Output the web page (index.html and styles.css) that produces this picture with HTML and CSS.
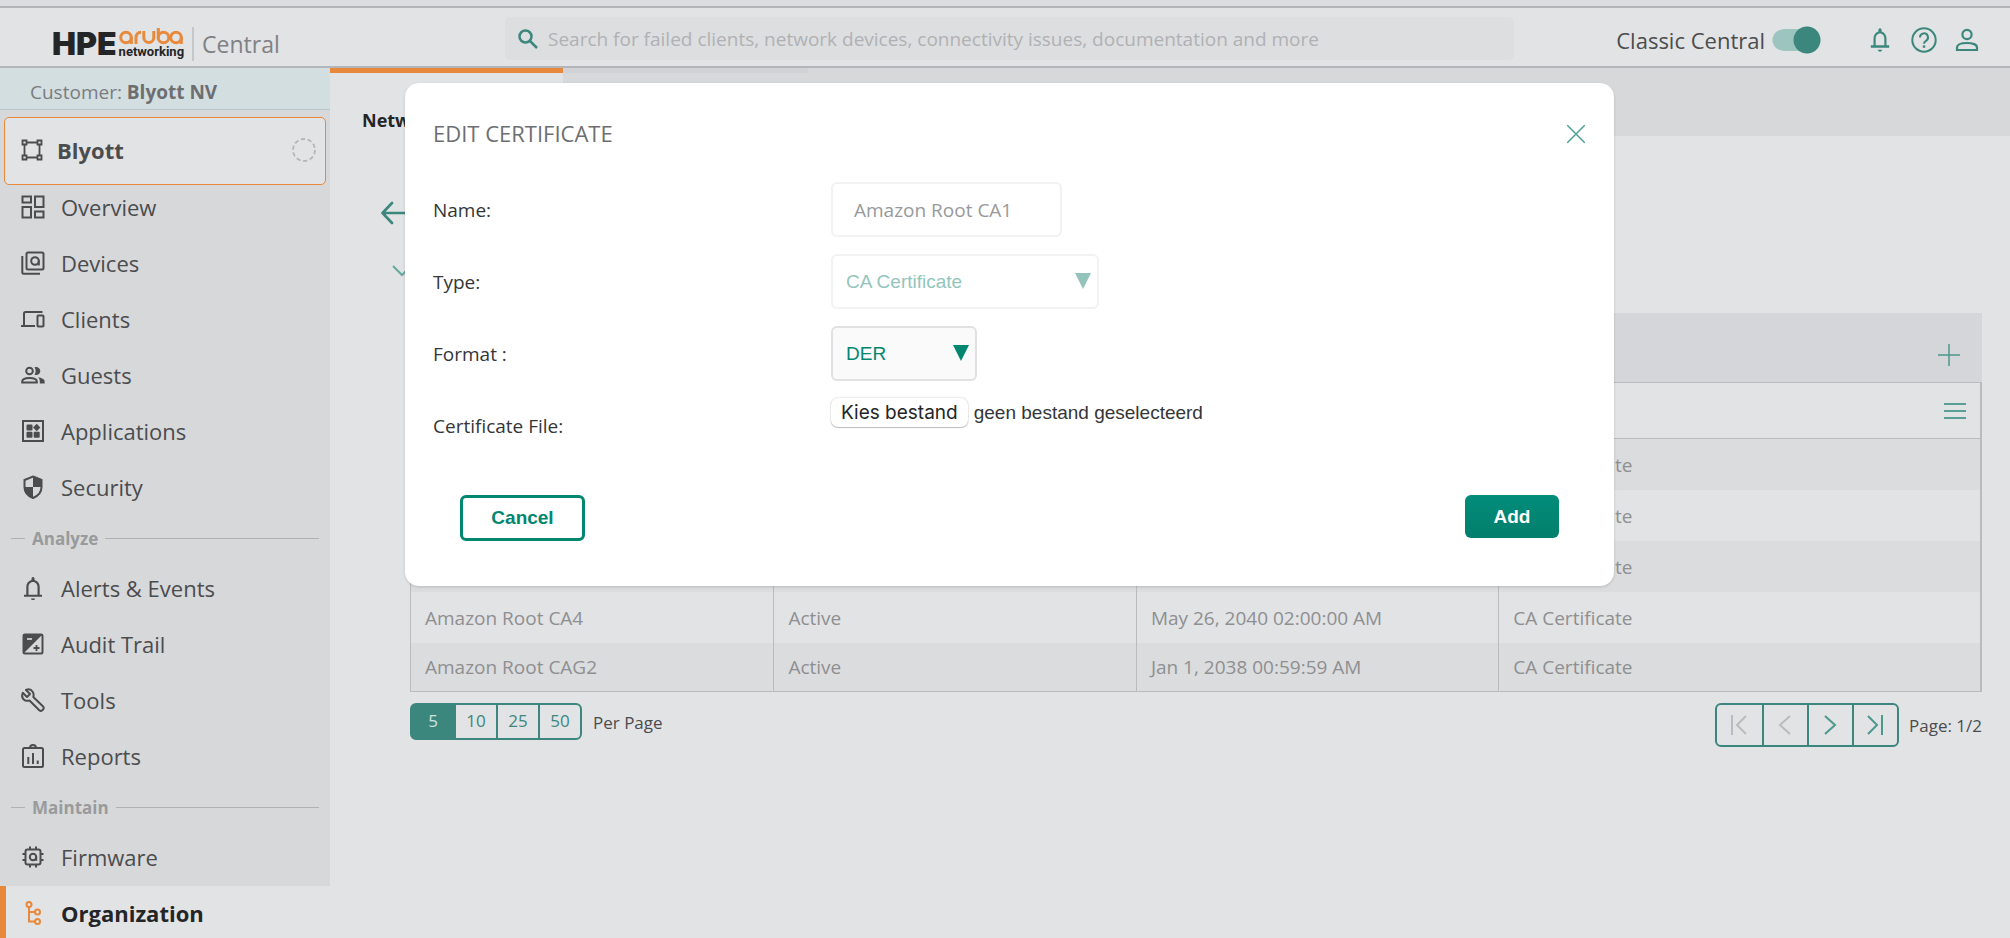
FILE: index.html
```html
<!DOCTYPE html>
<html lang="en">
<head>
  <meta charset="UTF-8" />
  <meta name="viewport" content="width=device-width, initial-scale=1.0"/>
  <title>Central</title>
  <link rel="stylesheet" href="styles.css">
</head>
<body>
  <header class="topbar">
    <div class="brand">
      <span class="brand-hpe">HPE</span>
      <span class="brand-sub">
        <svg class="aruba" width="64" height="17" viewBox="0 0 64 17" role="img" aria-label="aruba">
          <g fill="none" stroke="#e78a3c" stroke-width="3">
            <circle cx="7" cy="9.500" r="5.300"/><path d="M12.300 9v7"/>
            <path d="M17 16v-6.500c0-3.200 1.800-5.300 5-5.300"/>
            <path d="M24.800 3v6.500a5 5 0 0 0 10 0V3"/>
            <path d="M39.300 0v9.500"/><circle cx="44.500" cy="9.500" r="5.300"/>
            <circle cx="57" cy="9.500" r="5.300"/><path d="M62.300 9v7"/>
          </g>
        </svg>
        <span class="networking">networking</span>
      </span>
      <span class="brand-app">Central</span>
    </div>
    <label class="search">
      <svg width="22" height="22" viewBox="0 0 22 22" fill="none" stroke="#3c877d" stroke-width="2.500"><circle cx="8.500" cy="8.500" r="6"/><path d="M13 13l7 7"/></svg>
      <input type="search" aria-label="Search" placeholder="Search for failed clients, network devices, connectivity issues, documentation and more">
    </label>
    <div class="tools">
      <label class="switch">Classic Central <input type="checkbox" role="switch" checked></label>
      <button aria-label="Notifications"><svg width="26" height="28" viewBox="0 0 24 24" preserveAspectRatio="none"><path d="M12 22c1.100 0 2-.7 2-1.600h-4c0 .9.900 1.600 2 1.600zm6-5.400V11c0-3.100-1.600-5.600-4.500-6.300V3.500a1.500 1.500 0 0 0-3 0v1.200C7.600 5.400 6 7.900 6 11v5.600H3.500v2h17v-2H18zm-2 0H8V11c0-2.500 1.500-4.500 4-4.500s4 2 4 4.500v5.600z"/></svg></button>
      <button aria-label="Help"><svg width="26" height="26" viewBox="0 0 26 26" fill="none" stroke="currentColor" stroke-width="2"><circle cx="13" cy="13" r="11.700"/><path d="M9 10.500a4 4 0 1 1 6 3.300c-1.400.9-2 1.500-2 2.900"/><path d="M13 18.400v2.400" stroke-width="2.400"/></svg></button>
      <button aria-label="Account"><svg width="24" height="24" viewBox="0 0 24 24" fill="none" stroke="currentColor" stroke-width="2.200"><circle cx="12" cy="6.500" r="4.600"/><path d="M2 22v-2.500c0-3 4.500-4.500 10-4.500s10 1.500 10 4.500V22z"/></svg></button>
    </div>
  </header>

  <div class="layout">
    <aside class="sidebar">
      <div class="customer">Customer: <b>Blyott NV</b></div>
      <button class="group">
        <svg width="22" height="22" viewBox="0 0 22 22" fill="none" stroke="currentColor" stroke-width="1.800"><path d="M1.500 1.500h4v4h-4zM16.500 1.500h4v4h-4zM1.500 16.500h4v4h-4zM16.500 16.500h4v4h-4zM5.500 3.500h11M5.500 18.500h11M3.500 5.500v11M18.500 5.500v11"/></svg>
        <span>Blyott</span>
        <svg class="ring" width="24" height="24" viewBox="0 0 24 24" fill="none" stroke="#b4b5b7" stroke-width="1.800" stroke-dasharray="4.300 2.600"><circle cx="12" cy="12" r="11"/></svg>
      </button>
      <nav class="menu">
        <a href="#"><svg width="24" height="24" viewBox="0 0 24 24" fill="none" stroke="currentColor" stroke-width="2"><path d="M1.500 1.500h8.500v6H1.500zM14 1.500h8.500v10.500H14zM1.500 12h8.500v10.500H1.500zM14 16.500h8.500v6H14z"/></svg>Overview</a>
        <a href="#"><svg width="24" height="24" viewBox="0 0 24 24" fill="none" stroke="currentColor" stroke-width="2"><rect x="5.500" y="1.500" width="17" height="17" rx="1.500"/><path d="M1.300 5v16.200q0 1.500 1.500 1.500H19"/><circle cx="14" cy="10" r="3.800"/><path d="M17.800 9.500v5"/></svg>Devices</a>
        <a href="#"><svg width="24" height="24" viewBox="0 0 24 24" fill="none" stroke="currentColor" stroke-width="2"><path d="M21.500 5H4.500q-1.500 0-1.500 1.500V18.500M0 19h14"/><rect x="16.500" y="8.500" width="6" height="11" rx=".8"/></svg>Clients</a>
        <a href="#"><svg width="24" height="24" viewBox="0 0 24 24" fill="none" stroke="currentColor" stroke-width="2"><circle cx="8.500" cy="8" r="3.300"/><path d="M1.200 19.500v-1c0-2.200 3.300-3.500 7.300-3.500s7.300 1.300 7.300 3.500v1z"/><path d="M13.500 4.200c3-.9 5.800 1 5.800 3.800s-2.800 4.700-5.800 3.800c1.500-2.300 1.500-5.300 0-7.600zM17 14.300c3.500.5 6.600 1.800 6.600 4.200v2h-4.800v-2c0-1.800-.6-3.100-1.800-4.200z" fill="currentColor" stroke="none"/></svg>Guests</a>
        <a href="#"><svg width="24" height="24" viewBox="0 0 24 24" fill="currentColor"><path d="M2 2h20v20H2z" fill="none" stroke="currentColor" stroke-width="2"/><rect x="5.500" y="5.500" width="6" height="6" rx="1"/><rect x="5.500" y="12.700" width="6" height="6" rx="1"/><rect x="12.700" y="12.700" width="6" height="6" rx="1"/><path d="M15.700 4.800l3.700 3.700-3.700 3.700L12 8.500z"/></svg>Applications</a>
        <a href="#"><svg width="24" height="24" viewBox="0 0 24 24"><path d="M12 1.500l8.500 3.500v7c0 5.200-3.400 9-8.500 11-5.100-2-8.500-5.800-8.500-11V5z" fill="none" stroke="currentColor" stroke-width="2"/><path d="M12 1l9 3.500v7.500h-9zM3 12h9v11.500C6.600 21 3.300 17 3 12z" fill="currentColor"/></svg>Security</a>
        <h2>Analyze</h2>
        <a href="#"><svg width="24" height="24" viewBox="0 0 24 24" fill="currentColor"><path d="M12 24c1.200 0 2-.6 2-1.600h-4c0 1 .8 1.600 2 1.600zm6.700-5.200V11c0-3.400-1.900-6.200-5.200-7V2.500a1.500 1.500 0 0 0-3 0V4c-3.300.8-5.200 3.600-5.200 7v7.800H3v2h18v-2h-2.300zm-2.200 0h-9V11c0-2.800 1.700-5.100 4.500-5.100s4.500 2.300 4.500 5.100v7.800z"/></svg>Alerts &amp; Events</a>
        <a href="#"><svg width="24" height="24" viewBox="0 0 24 24"><rect x="2.500" y="2.500" width="19" height="19" rx="1.500" fill="none" stroke="currentColor" stroke-width="2"/><path d="M2 2h20L2 22z" fill="currentColor"/><path d="M6 7h5" stroke="#d6d7da" stroke-width="1.700"/><path d="M12.500 16h6M15.500 13v6" stroke="currentColor" stroke-width="1.800"/></svg>Audit Trail</a>
        <a href="#"><svg width="24" height="24" viewBox="0 0 24 24" fill="none" stroke="currentColor" stroke-width="2" stroke-linejoin="round"><path d="M5 2l4 4-3 3-4.200-4.200C.5 8 1.500 11 4 12.300c1.600.8 3 .7 4.500.2l9.800 9.800q1.500 1.200 3 0l.8-.8q1.200-1.500 0-3L12.300 9c.6-2 .4-3.500-.5-5C10.300 1.700 7.500.8 5 2z"/></svg>Tools</a>
        <a href="#"><svg width="24" height="24" viewBox="0 0 24 24" fill="none" stroke="currentColor" stroke-width="2"><rect x="2" y="4" width="20" height="19" rx="1.500"/><path d="M9 4a3 3 0 0 1 6 0"/><path d="M7.300 13v7M12 9v11M16.700 16.500V20"/></svg>Reports</a>
        <h2>Maintain</h2>
        <a href="#"><svg width="24" height="24" viewBox="0 0 24 24" fill="none" stroke="currentColor" stroke-width="2"><rect x="4.500" y="4.500" width="15" height="15" rx="2"/><path d="M9 1.500v3M15 1.500v3M9 19.500v3M15 19.500v3M1.500 9h3M1.500 15h3M19.500 9h3M19.500 15h3"/><circle cx="12" cy="12" r="3.200"/><path d="M15.200 11.500v4.300"/></svg>Firmware</a>
        <a href="#" class="current"><svg width="24" height="24" viewBox="0 0 24 24" fill="none" stroke="#e8883a" stroke-width="2"><circle cx="8" cy="3.500" r="2.500"/><circle cx="16.500" cy="11" r="2.500"/><circle cx="16.500" cy="20.500" r="2.500"/><path d="M8 6v14.500h6M8 11h6"/></svg>Organization</a>
      </nav>
    </aside>

    <main class="content">
      <div class="tabs">
        <a href="#" class="tab">Network Structure</a>
        <span class="tab-rest"></span>
      </div>
      <div class="page">
        <button class="back" aria-label="Back"><svg width="26" height="24" viewBox="0 0 26 24" fill="none" stroke="#3c877d" stroke-width="2.600" stroke-linecap="round" stroke-linejoin="round"><path d="M11 2L1.500 12 11 22M2 12h23"/></svg></button>
        <button class="collapse" aria-label="Collapse"><svg width="20" height="12" viewBox="0 0 20 12" fill="none" stroke="#66a79e" stroke-width="2"><path d="M1 1l9 9 9-9"/></svg></button>
        <section class="store">
          <div class="store-bar">
            <button aria-label="Add certificate"><svg width="22" height="22" viewBox="0 0 22 22" fill="none" stroke="#4b988c" stroke-width="1.500"><path d="M0 11h22M11 0v22"/></svg></button>
          </div>
          <table>
            <thead>
              <tr><th></th><th></th><th></th><th class="cols"><button aria-label="Columns"><svg width="22" height="18" viewBox="0 0 22 18" stroke="#5a9f95" stroke-width="2"><path d="M0 2h22M0 9h22M0 16h22"/></svg></button></th></tr>
            </thead>
            <tbody>
              <tr><td>Amazon Root CA1</td><td>Active</td><td></td><td>CA Certificate</td></tr>
              <tr><td></td><td>Active</td><td></td><td>CA Certificate</td></tr>
              <tr><td>Amazon Root CA3</td><td>Active</td><td></td><td>CA Certificate</td></tr>
              <tr><td>Amazon Root CA4</td><td>Active</td><td>May 26, 2040 02:00:00 AM</td><td>CA Certificate</td></tr>
              <tr><td>Amazon Root CAG2</td><td>Active</td><td>Jan 1, 2038 00:59:59 AM</td><td>CA Certificate</td></tr>
            </tbody>
          </table>
          <div class="paging">
            <div class="sizes">
              <button class="on">5</button><button>10</button><button>25</button><button>50</button>
            </div>
            <span>Per Page</span>
            <div class="pager">
              <button disabled aria-label="First page"><svg width="18" height="20" viewBox="0 0 18 20"><path d="M2 0v20M16 1L7 10l9 9"/></svg></button>
              <button disabled aria-label="Previous page"><svg width="18" height="20" viewBox="0 0 18 20"><path d="M14 1L4 10l10 9"/></svg></button>
              <button aria-label="Next page"><svg width="18" height="20" viewBox="0 0 18 20"><path d="M4 1l10 9-10 9"/></svg></button>
              <button aria-label="Last page"><svg width="18" height="20" viewBox="0 0 18 20"><path d="M2 1l9 9-9 9M16 0v20"/></svg></button>
            </div>
            <span class="page-no">Page: 1/2</span>
          </div>
        </section>
      </div>
    </main>
  </div>

  <form class="modal" role="dialog" aria-labelledby="title">
    <div class="modal-head">
      <h1 id="title">EDIT CERTIFICATE</h1>
      <button type="button" class="close" aria-label="Close"><svg width="18" height="18" viewBox="0 0 18 18" fill="none" stroke="#4da196" stroke-width="1.500"><path d="M0 0l18 18M18 0L0 18"/></svg></button>
    </div>
    <div class="fields">
      <label for="name">Name:</label>
      <div><input id="name" class="box" type="text" value="Amazon Root CA1" disabled></div>
      <label for="type">Type:</label>
      <div class="pick pick-off"><select id="type" class="box" disabled><option>CA Certificate</option></select></div>
      <label for="format">Format :</label>
      <div class="pick"><select id="format" class="box"><option>DER</option></select></div>
      <label for="file">Certificate File:</label>
      <div class="file">
        <input id="file" type="file" hidden>
        <button type="button" onclick="document.getElementById('file').click()">Kies bestand</button>
        <span>geen bestand geselecteerd</span>
      </div>
    </div>
    <div class="actions">
      <button type="button" class="cancel">Cancel</button>
      <button type="submit" class="add">Add</button>
    </div>
  </form>
</body>
</html>
```

FILE: styles.css
```css
* {
  box-sizing: border-box;
}
body {
  margin: 0;
  height: 100vh;
  overflow: hidden;
  display: flex;
  flex-direction: column;
  font-family: "Open Sans", "Noto Sans", sans-serif;
  font-size: 19px;
  color: #4b4c4e;
  background: #e2e3e5;
}
button {
  padding: 0;
  border: 0;
  background: none;
  font: inherit;
  color: inherit;
}
svg {
  display: block;
  flex: none;
}

/* top bar */
.topbar {
  flex: none;
  height: 68px;
  padding-top: 5px;
  border-top: 6px solid #dcdde0;
  border-bottom: 2px solid #b2b5b9;
  box-shadow: inset 0 2px #b2b4b7;
  display: flex;
  align-items: center;
}
.brand {
  width: 505px;
  padding: 10px 0 0 52px;
  display: flex;
  align-items: center;
}
.brand-hpe {
  font: bold 32px/34px Inter, sans-serif;
  font-weight: 900;
  color: #242527;
}
.brand-sub {
  margin: 0 8px 0 2px;
}
.networking {
  display: block;
  font: bold 13px/14px Roboto, sans-serif;
  color: #242527;
}
.brand-app {
  padding-left: 8px;
  border-left: 2px solid #c6c7c9;
  font-size: 23px;
  line-height: 34px;
  color: #808184;
}
.search {
  flex: 1;
  height: 43px;
  padding: 0 12px;
  display: flex;
  align-items: center;
  gap: 9px;
  border-radius: 5px;
  background: #dddee0;
}
.search input {
  flex: 1;
  border: 0;
  padding: 0;
  background: none;
  font: 19px "Open Sans", "Noto Sans", sans-serif;
}
.search input::placeholder {
  color: #b0b1b4;
}
.tools {
  width: 496px;
  padding: 3px 31px 0 0;
  display: flex;
  align-items: center;
  justify-content: flex-end;
  color: #3c877d;
}
.tools svg {
  fill: currentColor;
}
.tools svg[fill="none"] {
  fill: none;
}
.tools button {
  margin-left: 18px;
}
.switch {
  margin-right: 28px;
  display: flex;
  align-items: center;
  gap: 7px;
  font-size: 22px;
  color: #4b4c4e;
}
.switch input {
  appearance: none;
  width: 49px;
  height: 28px;
  margin: 0;
  background:
    radial-gradient(circle at 35px 14px, #3c877d 13px, transparent 14px),
    linear-gradient(#9bc5be, #9bc5be) 11px 3px / 24px 22px no-repeat,
    radial-gradient(circle at 11px 14px, #9bc5be 10px, transparent 11px);
}

/* sidebar */
.layout {
  flex: 1;
  min-height: 0;
  display: flex;
}
.sidebar {
  width: 330px;
  flex: none;
  background: #d7d8da;
}
.customer {
  height: 42px;
  padding-left: 30px;
  border-bottom: 1px solid #b9c6c9;
  line-height: 48px;
  color: #7a7c7f;
  background: #d3dee0;
}
.customer b {
  color: #6d6e71;
}
.group {
  width: 322px;
  height: 68px;
  margin: 7px 4px 0;
  padding: 0 9px 3px 16px;
  display: flex;
  align-items: center;
  gap: 14px;
  border: 1px solid #e8883a;
  border-radius: 5px;
  background: #e2e3e5;
  font-size: 22px;
  font-weight: bold;
}
.ring {
  margin-left: auto;
}
.menu {
  margin-top: -5px;
}
.menu a {
  height: 56px;
  padding: 0 0 2px 21px;
  display: flex;
  align-items: center;
  gap: 16px;
  font-size: 22px;
  color: inherit;
  text-decoration: none;
}
.menu h2 {
  height: 45px;
  margin: 0 11px;
  display: flex;
  align-items: center;
  gap: 7px;
  font-size: 17px;
  color: #999a9c;
}
.menu h2::before,
.menu h2::after {
  content: "";
  width: 14px;
  height: 1px;
  background: #b0b1b3;
}
.menu h2::after {
  flex: 1;
}
.menu .current {
  padding-left: 15px;
  border-left: 6px solid #e8883a;
  background: #e2e3e5;
  font-weight: bold;
  color: #242527;
}

/* content */
.content {
  flex: 1;
}
.tabs {
  height: 68px;
  display: flex;
}
.tab {
  width: 233px;
  padding: 32px;
  border-top: 5px solid #e8883a;
  font-size: 18px;
  line-height: 30px;
  font-weight: bold;
  color: #242527;
  text-decoration: none;
  white-space: nowrap;
}
.tab-rest {
  flex: 1;
  background: #d7d8da;
}
.tab-rest::before {
  content: "";
  display: block;
  width: 245px;
  height: 5px;
  background: #d1d2d5;
}
.page {
  padding: 65px 28px 0 80px;
}
.back {
  display: block;
  margin-left: -29px;
}
.collapse {
  display: block;
  margin: 40px 0 36px -18px;
}
.store-bar {
  height: 69px;
  padding: 15px 22px 0 0;
  display: flex;
  align-items: center;
  justify-content: flex-end;
  background: #d5d6da;
}
table {
  width: 100%;
  table-layout: fixed;
  border-spacing: 0;
  border: 1px solid #babbbd;
  border-right-width: 2px;
  color: #8e8f91;
}
th {
  height: 56px;
  padding: 0;
  border-bottom: 1px solid #babbbd;
}
.cols button {
  display: block;
  margin: 0 14px 0 auto;
}
td {
  height: 51px;
  padding: 0 0 0 14px;
  border-left: 1px solid #babbbd;
}
td:first-child {
  border-left: 0;
}
th:nth-child(-n+3) {
  width: 23.1%;
}
tbody tr:nth-child(odd) {
  background: #dbdcde;
}
tbody tr:last-child td {
  height: 48px;
}
.paging {
  margin-top: 11px;
  display: flex;
  align-items: flex-start;
  font-size: 17px;
  line-height: 40px;
}
.sizes,
.pager {
  display: flex;
  border: 2px solid #3c877d;
  border-radius: 6px;
}
.sizes {
  margin-right: 11px;
}
.sizes button {
  width: 42px;
  height: 33px;
  line-height: 31px;
  padding-bottom: 2px;
  color: #3c877d;
}
.sizes button + button,
.pager button + button {
  border-left: 2px solid #3c877d;
}
.sizes .on {
  background: #3c877d;
  color: #cfe3e0;
}
.pager {
  margin-left: auto;
}
.pager button {
  width: 45px;
  height: 40px;
  display: flex;
  align-items: center;
  justify-content: center;
  color: #4b988c;
}
.pager button:disabled {
  color: #babbbd;
}
.pager svg {
  fill: none;
  stroke: currentColor;
  stroke-width: 2;
}
.page-no {
  margin-left: 10px;
  line-height: 46px;
}

/* dialog */
.modal {
  position: absolute;
  top: 83px;
  left: 405px;
  right: 396px;
  padding: 28px 28px 45px;
  border-radius: 14px;
  background: #fff;
  box-shadow: 0 1px 3px rgba(0, 0, 0, 0.15);
  color: #343638;
}
.modal-head {
  display: flex;
  justify-content: space-between;
  align-items: center;
}
h1 {
  margin: 0;
  font-size: 22px;
  line-height: 44px;
  font-weight: normal;
  color: #6d6e71;
}
.close {
  padding: 2px 1px 0 0;
}
.fields {
  margin-top: 27px;
  display: grid;
  grid-template-columns: 398px 1fr;
  grid-auto-rows: 55px;
  row-gap: 17px;
}
.fields label {
  line-height: 56px;
}
.box {
  appearance: none;
  height: 55px;
  border: 2px solid #e0e1e2;
  border-radius: 6px;
  background: #fafafa;
  color: #01866f;
  opacity: 1;
  padding: 0 13px;
  font: 19px "Liberation Sans", sans-serif;
}
#name {
  width: 231px;
  padding: 0 21px;
  font: 19px "Open Sans", "Noto Sans", sans-serif;
  color: #98999b;
}
#type {
  width: 268px;
}
#format {
  width: 146px;
}
.box:disabled {
  border-color: #f2f2f3;
  background: #fff;
}
#type:disabled {
  color: #93c5bb;
}
.pick {
  justify-self: start;
  position: relative;
  color: #01866f;
}
.pick-off {
  color: #93c3ba;
}
.pick::after {
  content: "";
  position: absolute;
  top: 19px;
  right: 8px;
  border: 8px solid transparent;
  border-top: 16px solid currentColor;
  border-bottom: 0;
  pointer-events: none;
}
.file {
  display: flex;
  align-items: center;
  align-self: start;
  gap: 6px;
  font: 19px "Liberation Sans", sans-serif;
}
.file button {
  height: 29px;
  padding: 0 10px;
  border-radius: 7px;
  box-shadow: 0 0 2px rgba(0, 0, 0, 0.25), 0 1px 1px rgba(0, 0, 0, 0.2);
  font: 19px Inter, sans-serif;
  color: #242527;
}
.actions {
  margin: 42px 27px 0;
  display: flex;
  justify-content: space-between;
  align-items: flex-start;
}
.actions button {
  border-radius: 6px;
  font: bold 19px "Liberation Sans", sans-serif;
}
.cancel {
  width: 125px;
  height: 46px;
  border: 3px solid #01866f;
  color: #01866f;
}
.add {
  width: 94px;
  height: 43px;
  background: linear-gradient(#028c7a, #027f6c);
  color: #fff;
}
```
